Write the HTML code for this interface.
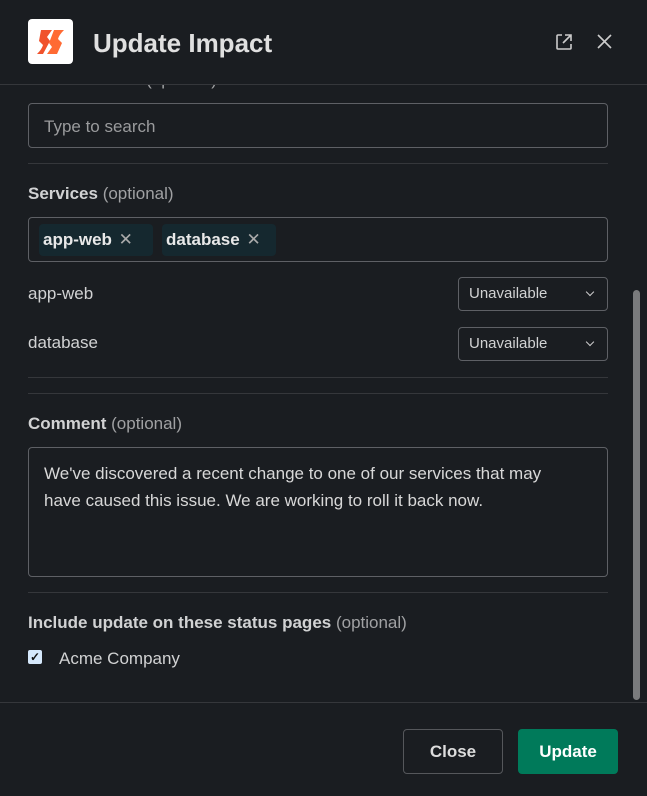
<!DOCTYPE html>
<html><head><style>
body{margin:0;width:647px;height:796px;background:#1a1d21;font-family:"Liberation Sans",sans-serif;color:#d1d2d3;position:relative;overflow:hidden}
.a{position:absolute}
.hr{position:absolute;left:28px;width:580px;height:1px;background:#35373b}
.box{position:absolute;border:1px solid #5e6065;border-radius:4px;box-sizing:border-box}
.lbl{font-size:17px;font-weight:bold;color:#d1d2d3}
.lbl span{font-weight:normal;color:#a0a1a3}
.tag{position:absolute;top:6px;height:32px;background:#15282f;border-radius:4px;font-weight:bold;color:#e8e8e8;font-size:17px;line-height:32px;padding-left:4px;box-sizing:border-box}
.sel{position:absolute;left:458px;width:150px;height:34px;border:1px solid #5e6065;border-radius:4px;box-sizing:border-box;font-size:15px;line-height:32px;padding-left:10px;color:#d1d2d3}
.sel::after{content:"";position:absolute;right:14px;top:11px;width:5px;height:5px;border-right:1.5px solid #ccc;border-bottom:1.5px solid #ccc;transform:rotate(45deg)}
</style></head><body>
<div class="a" style="left:0;top:0;width:647px;height:84px;border-bottom:1px solid #35373b;background:#1a1d21;z-index:2">
<div class="a" style="left:28px;top:19px;width:45px;height:45px;background:#fff;border-radius:4px">
<svg width="45" height="45" viewBox="0 0 45 45"><path d="M13 11 L24 11 L19 18 L22 22 L15 35 L9 35 Q14 30 15 26 L11 22 Z" fill="#f0522c"/><path d="M26 11 L36 11 Q31 16 30 20 L34 24 L29 35 L19 35 L24 28 L21 24 Z" fill="#ff6a33"/></svg></div>
<div class="a" style="left:93px;top:28px;font-size:26px;font-weight:bold;color:#e0e0e0">Update Impact</div>
<svg class="a" style="left:554px;top:32px" width="20" height="20" viewBox="0 0 20 20" fill="none" stroke="#ccc" stroke-width="1.6"><path d="M8 3H4a1 1 0 0 0-1 1v12a1 1 0 0 0 1 1h12a1 1 0 0 0 1-1v-4M11 3h6v6M17 3L9 11"/></svg>
<svg class="a" style="left:596px;top:33px" width="17" height="17" viewBox="0 0 17 17" stroke="#ccc" stroke-width="1.6"><path d="M2 2L15 15M15 2L2 15"/></svg>
</div>
<div class="a lbl" style="left:28px;top:70px">Environments <span>(optional)</span></div>
<div class="box" style="left:28px;top:103px;width:580px;height:45px;font-size:17px;color:#9a9b9d;padding:13px 15px">Type to search</div>
<div class="hr" style="top:163px"></div>
<div class="a lbl" style="left:28px;top:184px">Services <span>(optional)</span></div>
<div class="box" style="left:28px;top:217px;width:580px;height:45px">
<div class="tag" style="left:10px;width:114px">app-web <span style="font-weight:normal;color:#aaa;margin-left:2px">✕</span></div>
<div class="tag" style="left:133px;width:114px">database <span style="font-weight:normal;color:#aaa;margin-left:2px">✕</span></div>
</div>
<div class="a" style="left:28px;top:284px;font-size:17px">app-web</div>
<div class="sel" style="top:277px">Unavailable</div>
<div class="a" style="left:28px;top:333px;font-size:17px">database</div>
<div class="sel" style="top:327px">Unavailable</div>
<div class="hr" style="top:377px"></div>
<div class="hr" style="top:393px"></div>
<div class="a lbl" style="left:28px;top:414px">Comment <span>(optional)</span></div>
<div class="box" style="left:28px;top:447px;width:580px;height:130px;font-size:17px;line-height:27px;padding:12px 40px 10px 15px;color:#d8d8d8">We've discovered a recent change to one of our services that may have caused this issue. We are working to roll it back now.</div>
<div class="hr" style="top:592px"></div>
<div class="a lbl" style="left:28px;top:613px">Include update on these status pages <span>(optional)</span></div>
<div class="a" style="left:28px;top:650px;width:14px;height:14px;background:#d5e8fb;border-radius:2px;color:#111;font-size:12px;line-height:14px;text-align:center;font-weight:bold">✓</div>
<div class="a" style="left:59px;top:649px;font-size:17px">Acme Company</div>
<div class="a" style="left:633px;top:290px;width:7px;height:410px;background:#7a7b7d;border-radius:4px"></div>
<div class="a" style="left:0;top:702px;width:647px;height:1px;background:#35373b"></div>
<div class="box" style="left:403px;top:729px;width:100px;height:45px;border-color:#55575b;font-size:17px;font-weight:bold;text-align:center;line-height:43px;color:#ddd">Close</div>
<div class="a" style="left:518px;top:729px;width:100px;height:45px;background:#007a5a;border-radius:4px;font-size:17px;font-weight:bold;text-align:center;line-height:45px;color:#fff">Update</div>
</body></html>
